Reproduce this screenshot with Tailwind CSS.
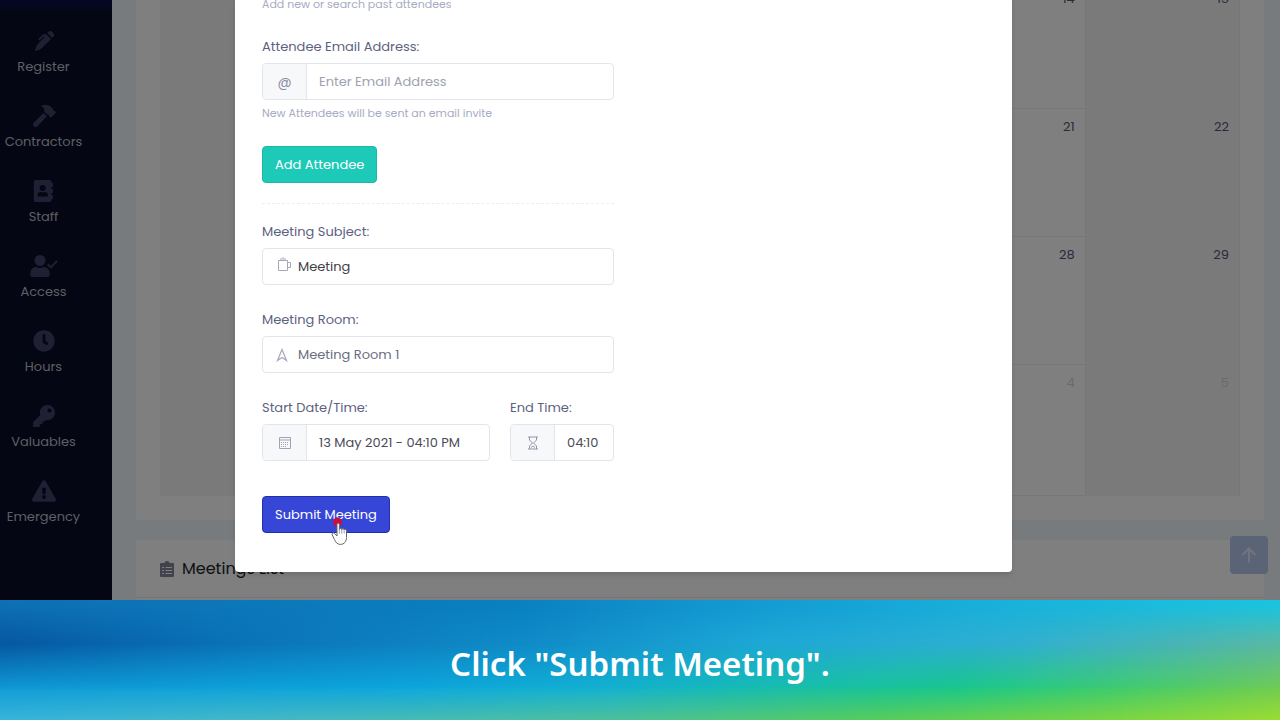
<!DOCTYPE html>
<html lang="en">
<head>
  <meta charset="UTF-8" />
  <meta name="viewport" content="width=device-width, initial-scale=1.0" />
  <title>Submit Meeting</title>
  <script src="https://cdn.jsdelivr.net/npm/@tailwindcss/browser@4"></script>
</head>
<body class="h-screen flex flex-col overflow-hidden font-['Poppins','Inter',sans-serif] text-[13px] leading-5">

  <div class="relative flex-1 min-h-0 flex overflow-hidden bg-[#f0f6fb]">

    <!-- Sidebar -->
    <nav class="w-28 shrink-0 bg-[#080c26] text-[#bdbdc8]">
      <div class="h-[9px] bg-[#0a0c40]"></div>
      <div class="flex flex-col gap-[27px] pt-5 pr-[25px]">
        <a href="#" class="flex flex-col items-center gap-1">
          <svg class="size-6 fill-[#3e4066]" viewBox="0 0 24 24"><path d="M14.2 5.2l4.800 4.800-8.600 8.600c-1.600 1.600-4.400 3-7.400 3.400.4-3 1.600-5.700 3.300-7.500l6-6.300-.8-.8-4 4-1.300-1.300 4.700-4.700c.5-.5 1.300-.5 1.800 0zM15.300 4.100l1.600-1.500c.8-.8 2-.8 2.800 0l2 2c.8.800.8 2 0 2.800l-1.600 1.500z"/></svg>
          <span>Register</span>
        </a>
        <a href="#" class="flex flex-col items-center gap-1">
          <svg class="size-6 fill-[#3e4066]" viewBox="0 0 24 24"><path d="M8.800 1.800C13 -.2 17 .8 19.600 3.400l1.200 1.300c.4.500.6 1 .5 1.700l.5.500c.5-.2.9-.1 1.300.3l.5.500c.4.400.4 1 0 1.400l-4.200 4.200c-.4.400-1 .4-1.400 0l-.8-.8c-.4-.4-.5-.9-.3-1.400l-.5-.5c-.7.100-1.300-.1-1.800-.6l-1.600-1.600c-.5-.5-.7-1.100-.6-1.800C12.300 4.500 11 2.800 8.800 1.800z"/><path d="M11.500 8.900l3.400 3.400-9.600 10.100c-.9.900-2.200.9-3.100 0l-.6-.6c-.9-.9-.9-2.200 0-3.100z"/></svg>
          <span>Contractors</span>
        </a>
        <a href="#" class="flex flex-col items-center gap-1">
          <svg class="size-6 fill-[#3e4066]" viewBox="0 0 24 24"><path fill-rule="evenodd" d="M3.500 1h14.300c.9 0 1.700.8 1.700 1.700V4h.8c.4 0 .7.300.7.700v2.600c0 .4-.3.700-.7.700h-.8v2h.8c.4 0 .7.300.7.700v2.600c0 .4-.3.700-.7.700h-.8v2h.8c.4 0 .7.300.7.700v2.600c0 .4-.3.700-.7.700h-.8v1.300c0 .9-.8 1.700-1.700 1.700H3.500c-.9 0-1.700-.8-1.700-1.700V2.700C1.800 1.800 2.600 1 3.500 1zm7.200 5a3 3 0 1 0 0 6 3 3 0 0 0 0-6zM8.500 13c-1.600 0-3 1.100-3 2.500v1c0 .6.500 1 1 1h8.400c.6 0 1-.4 1-1v-1c0-1.400-1.400-2.500-3-2.500-.7 0-1 .4-2.200.4S9.200 13 8.500 13z"/></svg>
          <span>Staff</span>
        </a>
        <a href="#" class="flex flex-col items-center gap-1">
          <svg class="w-7 h-6 fill-[#3e4066]" viewBox="0 0 28 24"><circle cx="10" cy="6.500" r="5.500"/><path d="M6.300 13c1.200.6 2.400.9 3.700.9s2.500-.3 3.700-.9c3.300 0 5.900 2.500 5.900 5.800V21c0 1.100-.9 2-2 2H2.400c-1.100 0-2-.9-2-2v-2.200C.4 15.500 3 13 6.300 13z"/><path d="M26.300 6.300l1.400 1.400-7 7.100-3.700-3.700 1.400-1.500 2.300 2.300z"/></svg>
          <span>Access</span>
        </a>
        <a href="#" class="flex flex-col items-center gap-1">
          <svg class="size-6 p-px fill-[#3e4066]" viewBox="0 0 512 512"><path d="M256,8C119,8,8,119,8,256S119,504,256,504,504,393,504,256,393,8,256,8Zm92.490,313h0l-20,25a16,16,0,0,1-22.490,2.500h0l-67-49.720a40,40,0,0,1-15-31.230V112a16,16,0,0,1,16-16h32a16,16,0,0,1,16,16V256l58,42.500A16,16,0,0,1,348.490,321Z"/></svg>
          <span>Hours</span>
        </a>
        <a href="#" class="flex flex-col items-center gap-1">
          <svg class="size-6 p-px fill-[#3e4066]" viewBox="0 0 512 512"><path d="M512 176c0 97.200-78.800 176-176 176-11.200 0-22.200-1.100-32.800-3.100l-24 27A24 24 0 0 1 261.200 384H224v40c0 13.300-10.700 24-24 24h-40v40c0 13.300-10.700 24-24 24H24c-13.300 0-24-10.700-24-24v-78.100c0-6.300 2.500-12.400 7-16.900l161.800-161.800C163.100 213.800 160 195.300 160 176 160 78.800 238.800 0 336 0c97.500 0 176 78.500 176 176zM336 128c0 26.500 21.500 48 48 48s48-21.500 48-48-21.500-48-48-48-48 21.500-48 48z"/></svg>
          <span>Valuables</span>
        </a>
        <a href="#" class="flex flex-col items-center gap-1">
          <svg class="size-6 fill-[#3e4066]" viewBox="0 0 576 512"><path d="M569.500 440c18.500 32-4.700 72-41.600 72H48c-36.900 0-60-40-41.500-72L246.400 24c18.500-32 64.700-32 83.200 0l240 416zM288 354a46 46 0 1 0 0 92 46 46 0 0 0 0-92zm-43.700-165.300l7.400 136c.4 6.300 5.700 11.300 12 11.300h48.600c6.400 0 11.600-5 12-11.300l7.400-136c.3-6.900-5.100-12.700-12-12.700h-63.400c-6.900 0-12.400 5.800-12 12.700z"/></svg>
          <span>Emergency</span>
        </a>
      </div>
    </nav>

    <!-- Page content, scrolled down to the end of the calendar -->
    <main class="flex-1 min-w-0 flex flex-col justify-end gap-5 pl-6 pr-4 overflow-hidden">
      <section class="bg-white p-6 shrink-0">
        <table class="w-full table-fixed border-collapse text-right text-[#55557a]">
          <tbody>
            <tr class="h-32 align-top">
              <td class="bg-[#f5f5f5]"></td><td></td><td></td><td></td><td></td>
              <td class="border border-[#eeeeef] px-2.5 py-2">14</td>
              <td class="border-x border-[#eeeeef] bg-[#f5f5f5] px-2.5 py-2">15</td>
            </tr>
            <tr class="h-32 align-top">
              <td class="bg-[#f5f5f5]"></td><td></td><td></td><td></td><td></td>
              <td class="border border-[#eeeeef] px-2.5 py-2">21</td>
              <td class="border-x border-[#eeeeef] bg-[#f5f5f5] px-2.5 py-2">22</td>
            </tr>
            <tr class="h-32 align-top">
              <td class="bg-[#f5f5f5]"></td><td></td><td></td><td></td><td></td>
              <td class="border border-[#eeeeef] px-2.5 py-2">28</td>
              <td class="border-x border-[#eeeeef] bg-[#f5f5f5] px-2.5 py-2">29</td>
            </tr>
            <tr class="h-[131px] align-top text-[#d4d4d8]">
              <td class="bg-[#f5f5f5]"></td><td></td><td></td><td></td><td></td>
              <td class="border border-[#eeeeef] px-2.5 py-2">4</td>
              <td class="border-x border-[#eeeeef] bg-[#f5f5f5] px-2.5 py-2">5</td>
            </tr>
          </tbody>
        </table>
      </section>

      <section class="bg-white shrink-0 pb-0.5">
        <h2 class="flex items-center gap-2 h-[58px] px-6 border-b border-[#e8eaf2] text-base text-[#222]">
          <svg class="w-3.5 h-4 fill-[#85859c]" viewBox="0 0 14 16"><path fill-rule="evenodd" d="M1 2h3.500a2.500 2 0 0 1 5 0H13a1 1 0 0 1 1 1v12a1 1 0 0 1-1 1H1a1 1 0 0 1-1-1V3a1 1 0 0 1 1-1zm1 4v1h2V6zm3.500 0v1H12V6zM2 9v1h2V9zm3.500 0v1H12V9zM2 12v1h2v-1zm3.500 0v1H12v-1z"/></svg>
          Meetings List
        </h2>
      </section>
    </main>

    <button type="button" aria-label="Scroll to top" class="absolute right-3 bottom-[26px] size-[38px] rounded-sm bg-[#b6c6ee] flex items-center justify-center">
      <svg class="size-5 stroke-white/60 fill-none" viewBox="0 0 20 20" stroke-width="2.200"><path d="M10 17.500V4M3.500 10L10 3.500 16.500 10"/></svg>
    </button>

    <!-- Modal -->
    <div class="absolute inset-0 bg-black/50 flex flex-col justify-end pl-[235px] pr-[268px] pb-7">
      <div class="bg-white rounded-sm shadow-md pl-[27px] pr-[26px] pb-[39px] grid grid-cols-2 gap-5">
        <form class="text-[#5d6180]" onsubmit="return false">
          <p class="mb-[23px] text-[11px] leading-5 text-[#a7abc3]">Add new or search past attendees</p>

          <label for="email" class="block mb-1.5">Attendee Email Address:</label>
          <div class="flex h-[37px] border border-[#e2e5ec] rounded-sm overflow-hidden">
            <span class="w-11 shrink-0 flex items-center justify-center bg-[#f7f8fa] border-r border-[#e2e5ec] text-sm text-[#8a8ca6]">@</span>
            <input id="email" type="email" placeholder="Enter Email Address" class="flex-1 min-w-0 px-3 outline-none placeholder:text-[#a0a1b0]" />
          </div>
          <p class="mt-[3px] mb-[23px] text-[11px] leading-5 text-[#a7abc3]">New Attendees will be sent an email invite</p>

          <button type="button" class="h-[37px] px-3 rounded-sm bg-[#1dc9b7] border border-[#1bb8a8] text-white">Add Attendee</button>

          <hr class="mt-5 mb-[18px] border-dashed border-[#ebedf2]" />

          <label for="subject" class="block mb-1.5">Meeting Subject:</label>
          <div class="relative mb-[25px]">
            <svg class="absolute left-[15px] top-2 w-4 h-[18px] stroke-[#a5a7bb] fill-none" viewBox="0 0 16 18"><path d="M1.500 4.500h9v10h-9zM10.500 6.500h3v5h-3M4 4V2M6 4V1M8 4V2"/></svg>
            <input id="subject" type="text" value="Meeting" class="w-full h-[37px] pl-[35px] pr-3 border border-[#e2e5ec] rounded-sm text-[#3f4047] outline-none" />
          </div>

          <label for="room" class="block mb-1.5">Meeting Room:</label>
          <div class="relative mb-[25px]">
            <svg class="absolute left-3.5 top-3 w-3 h-3.5 stroke-[#a5a7bb] fill-none" viewBox="0 0 12 14" stroke-width="1.200"><path d="M6 1.500L10.500 12.500 6 9.500 1.500 12.500z"/></svg>
            <select id="room" class="appearance-none w-full h-[37px] pl-[35px] pr-3 border border-[#e2e5ec] rounded-sm text-[#6b6d80] outline-none">
              <option>Meeting Room 1</option>
            </select>
          </div>

          <div class="flex gap-5">
            <div class="flex-1 min-w-0">
              <label for="start" class="block mb-1.5">Start Date/Time:</label>
              <div class="flex h-[37px] border border-[#e2e5ec] rounded-sm overflow-hidden">
                <span class="w-11 shrink-0 flex items-center justify-center bg-[#f7f8fa] border-r border-[#e2e5ec]">
                  <svg class="size-3.5 stroke-[#a0a2b8] fill-none" viewBox="0 0 14 14"><path d="M1.500 1.500h11v11h-11zM1.500 4h11"/><path stroke-dasharray="1 1" d="M3 6.500h8M3 8.500h8M3 10.500h5"/></svg>
                </span>
                <input id="start" type="text" value="13 May 2021 - 04:10 PM" class="flex-1 min-w-0 px-3 text-[#4a4b57] outline-none" />
              </div>
            </div>
            <div class="w-[104px]">
              <label for="end" class="block mb-1.5">End Time:</label>
              <div class="flex h-[37px] border border-[#e2e5ec] rounded-sm overflow-hidden">
                <span class="w-11 shrink-0 flex items-center justify-center bg-[#f7f8fa] border-r border-[#e2e5ec]">
                  <svg class="w-3 h-3.5 stroke-[#9294ad] fill-none" viewBox="0 0 12 14"><path d="M1 1h10M1 13h10M2.500 1v3L5.500 7l-3 3v3M9.500 1v3L6.500 7l3 3v3M4 11.500L6 10l2 1.500"/></svg>
                </span>
                <input id="end" type="text" value="04:10" class="flex-1 min-w-0 px-3 text-[#4a4b57] outline-none" />
              </div>
            </div>
          </div>

          <div class="relative mt-[35px] flex">
            <button type="submit" class="h-[37px] px-3 rounded-sm bg-[#3646d6] border border-[#2230a8] text-white">Submit Meeting</button>
            <!-- Pointer with click marker -->
            <svg class="absolute left-[66px] top-5 w-6 h-8" viewBox="0 0 24 32"><circle cx="9.500" cy="6" r="4.500" fill="#c81040"/><path d="M9 16.500V8.500c0-1.800 2.400-1.800 2.400 0v5c0-1.500 2.400-1.500 2.400.2 0-1.300 2.400-1.300 2.400.4 0-1.200 2.300-1 2.300.8v6.500c0 4-2.300 7-6 7-3.300 0-4.800-2-6-4.800l-2.300-4.800c-.7-1.600.9-2.600 2.200-1.400L9 20z" fill="#fff" stroke="#666" stroke-width="1"/><path d="M11.400 13.500v4M13.800 14v3.500M16.200 14.500v3" stroke="#888" stroke-width=".8"/></svg>
          </div>
        </form>
      </div>
    </div>
  </div>

  <!-- Caption banner: horizontal colour bands, each fading into the one above -->
  <div class="relative h-[120px] shrink-0 flex items-center justify-center bg-[linear-gradient(to_right,#0e6fb4_0%,#0a80c0_40%,#1296d0_55%,#18aeda_75%,#1cc4de_100%)]">
    <div class="absolute inset-0 bg-[linear-gradient(to_right,#0658a2_0%,#0a72b6_18%,#108cc8_42%,#1ea8d6_60%,#30b0d0_80%,#58b8a4_100%)] mask-[linear-gradient(to_bottom,transparent_5%,black_35%)]"></div>
    <div class="absolute inset-0 bg-[linear-gradient(to_right,#109cd6_0%,#0ca8de_32%,#12b2d2_47%,#16bfa8_62%,#18c88a_75%,#40cc6c_88%,#70cc50_100%)] mask-[linear-gradient(to_bottom,transparent_36%,black_76%)]"></div>
    <div class="absolute inset-0 bg-[linear-gradient(to_right,#38b4da_0%,#44b8c4_22%,#4cc09a_48%,#56cc5c_68%,#78d444_85%,#9adc34_100%)] mask-[linear-gradient(to_bottom,transparent_72%,black_100%)]"></div>
    <p class="relative font-['Noto_Sans','Open_Sans',sans-serif] font-semibold text-[33px] leading-10 text-white mt-2">Click "Submit Meeting".</p>
  </div>

</body>
</html>
